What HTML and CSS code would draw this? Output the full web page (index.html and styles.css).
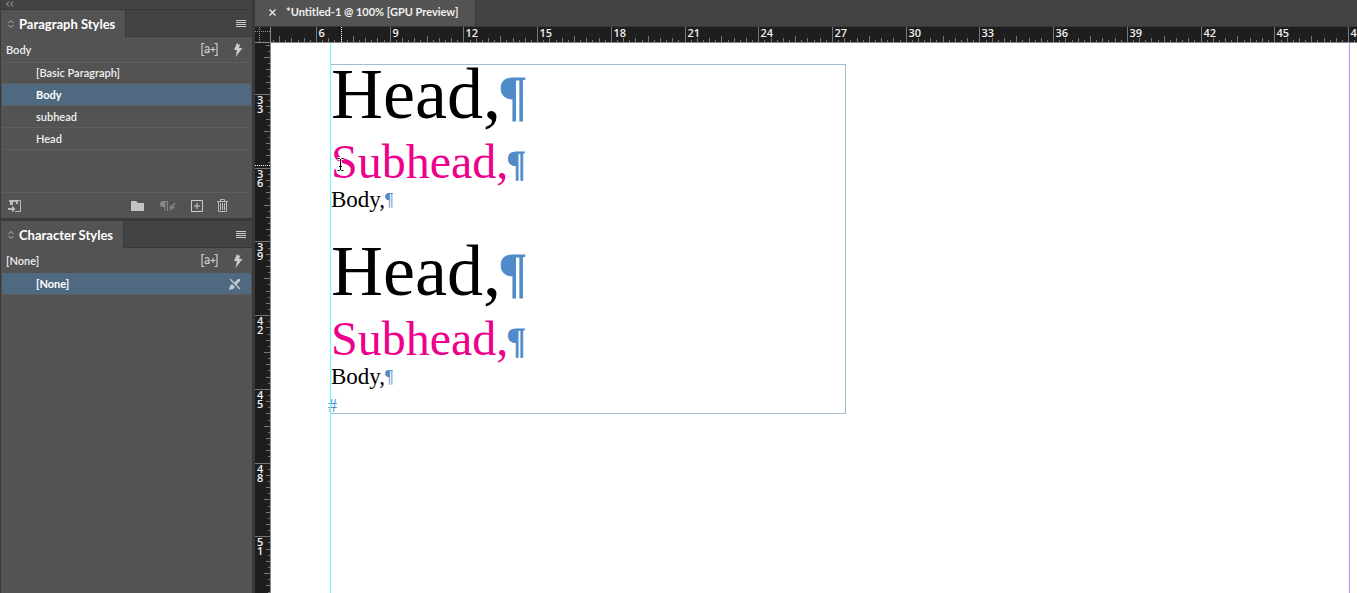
FILE: index.html
```
<!DOCTYPE html>
<html lang="en">
<head>
<meta charset="UTF-8">
<title>*Untitled-1 @ 100% [GPU Preview]</title>
<link rel="stylesheet" href="styles.css">
</head>
<body>
<svg class="defs" aria-hidden="true">
 <symbol id="updown" viewBox="0 0 6 10"><path d="M.5 4L3 1.500 5.500 4M.5 6L3 8.500 5.500 6" fill="none" stroke="#bbb"/></symbol>
 <symbol id="menu" viewBox="0 0 10 8"><path d="M0 .5h10M0 2.500h10M0 4.500h10M0 6.500h10" stroke="#ccc"/></symbol>
 <symbol id="aplus" viewBox="0 0 17 13"><path d="M3.500.5H1v12h2.500M13.500.5H16v12h-2.500M4 4.500Q8 2.500 8 5.500V10M8 6.500Q4 6.500 4 8.300 4 10 6 9.600L8 8.500M9.500 6.500h5M12 4v5" fill="none" stroke="#ccc" stroke-width="1.200"/></symbol>
 <symbol id="bolt" viewBox="0 0 10 14"><path d="M4 0L1 7h3L2.500 14 9.500 5H6l1.500-4.500L6 2z" fill="#ccc"/></symbol>
</svg>
<aside class="dock">
 <div class="dockbar"><svg width="8" height="6"><path d="M3 .5L.8 3 3 5.500M7 .5L4.800 3 7 5.500" fill="none" stroke="#aaa"/></svg></div>
 <section class="panel paragraph">
  <header class="tabs">
   <h2 class="tab"><svg width="6" height="10"><use href="#updown"/></svg>Paragraph Styles</h2>
   <button class="icon" aria-label="Panel menu"><svg width="10" height="8"><use href="#menu"/></svg></button>
  </header>
  <div class="current">
   <span>Body</span>
   <button class="icon" aria-label="Style override highlighter"><svg width="17" height="13"><use href="#aplus"/></svg></button>
   <button class="icon" aria-label="Quick apply"><svg width="10" height="14"><use href="#bolt"/></svg></button>
  </div>
  <ul class="styles">
   <li>[Basic Paragraph]</li>
   <li class="selected">Body</li>
   <li>subhead</li>
   <li>Head</li>
  </ul>
  <footer class="tools">
   <button class="icon load" aria-label="Load styles"><svg width="14" height="14"><path d="M2.500 6V1.500h10v11H7" fill="none" stroke="#bbb"/><path d="M1 1h9v4H8V3H5v3H3V3H1zM0 9h4V6.500L7.500 10 4 13.500V11H0z" fill="#bbb"/></svg></button>
   <button class="icon" aria-label="New group"><svg width="14" height="11"><path d="M0 1h5l2 2h6v8H0z" fill="#c4c4c4"/></svg></button>
   <button class="icon" aria-label="Clear overrides"><svg width="18" height="12"><path d="M4 1h5v10H8V2H6.500v9h-1V7H4Q1 7 1 4t3-3z" fill="#888"/><path d="M11 10l5-7M10.500 7.500h5M12 5l2 4" stroke="#808080" stroke-width="1.500"/></svg></button>
   <button class="icon" aria-label="New style"><svg width="12" height="12"><path d="M.5.5h11v11H.5zM6 3v6M3 6h6" fill="none" stroke="#ccc"/></svg></button>
   <button class="icon" aria-label="Delete style"><svg width="11" height="13"><path d="M0 2.500h11M3.500 2V.5h4V2M1.500 3v9.500h8V3M3.500 4v7M5.500 4v7M7.500 4v7" fill="none" stroke="#bbb"/></svg></button>
  </footer>
 </section>
 <section class="panel character">
  <header class="tabs">
   <h2 class="tab"><svg width="6" height="10"><use href="#updown"/></svg>Character Styles</h2>
   <button class="icon" aria-label="Panel menu"><svg width="10" height="8"><use href="#menu"/></svg></button>
  </header>
  <div class="current">
   <span>[None]</span>
   <button class="icon" aria-label="Style override highlighter"><svg width="17" height="13"><use href="#aplus"/></svg></button>
   <button class="icon" aria-label="Quick apply"><svg width="10" height="14"><use href="#bolt"/></svg></button>
  </div>
  <ul class="styles">
   <li class="selected">[None]<svg width="12" height="12"><path d="M1 1l10 10" stroke="#c4ccd4" stroke-width="1.200"/><path d="M0 12l1-4 2-2 3 3-2 2zM5 5l4-4 2 0 0 2-4 4z" fill="#c4ccd4"/></svg></li>
  </ul>
 </section>
</aside>
<main class="window">
 <div class="doctabs">
  <div class="doctab">
   <button class="icon" aria-label="Close"><svg width="7" height="7"><path d="M.5.5l6 6M6.500.5l-6 6" stroke="#eee" stroke-width="1.300"/></svg></button>
   <span>*Untitled-1 @ 100% [GPU Preview]</span>
  </div>
 </div>
 <div class="work">
  <svg class="corner" width="15" height="15"><path d="M4.500 0v15M0 4.500h15" stroke="#999" stroke-dasharray="1 1"/></svg>
  <svg class="ruler" id="hruler"></svg>
  <svg class="ruler" id="vruler"></svg>
  <div class="canvas">
   <div class="guide"></div>
   <div class="edge"></div>
   <article class="frame">
    <h1>Head,<i>¶</i></h1>
    <h3>Subhead,<i>¶</i></h3>
    <p>Body,<i>¶</i></p>
    <h1>Head,<i>¶</i></h1>
    <h3>Subhead,<i>¶</i></h3>
    <p>Body,<i>¶</i></p>
    <p class="end">#</p>
   </article>
   <svg class="cursor" width="9" height="15"><path d="M1.500 1.500h2l1 1 1-1h2M4.500 2v11M1.500 13.500h2l1-1 1 1h2M3 9.500h3" fill="none" stroke="#fff" stroke-width="3"/><path d="M1.500 1.500h2l1 1 1-1h2M4.500 2v11M1.500 13.500h2l1-1 1 1h2M3 9.500h3" fill="none" stroke="#000"/></svg>
  </div>
 </div>
</main>
<script src="rulers.js"></script>
</body>
</html>
```
FILE: styles.css
```
* {
 box-sizing: border-box;
}
body {
 margin: 0;
 display: flex;
 height: 100vh;
 overflow: hidden;
 background: #393939;
 color: #f0f0f0;
 font: 600 11px/16px Lato, sans-serif;
}
h1, h2, h3, p, ul {
 margin: 0;
 padding: 0;
 font-size: inherit;
 font-weight: inherit;
}
svg {
 display: block;
}
.defs {
 display: none;
}
.icon {
 display: block;
 padding: 0;
 border: 0;
 background: none;
}

/* panels */
.dock {
 display: flex;
 flex-direction: column;
 flex: none;
 width: 252px;
 padding-left: 1px;
}
.dockbar {
 height: 9px;
 padding: 1px 5px;
 background: #434343;
}
.panel {
 margin-top: 1px;
 background: #535353;
}
.paragraph {
 height: 208px;
 display: flex;
 flex-direction: column;
}
.character {
 flex: 1;
 margin-top: 3px;
}
.tabs {
 display: flex;
 align-items: center;
 justify-content: space-between;
 height: 27px;
 padding-right: 6px;
 background: #434343;
 box-shadow: inset 0 -1px #393939;
}
.tab {
 display: flex;
 align-items: center;
 gap: 5px;
 height: 27px;
 padding: 0 10px 0 7px;
 border-right: 1px solid #393939;
 background: #535353;
 color: #fff;
 font-size: 13px;
 font-weight: 700;
}
.current {
 display: flex;
 align-items: center;
 gap: 15px;
 height: 25px;
 padding: 0 9px 0 5px;
}
.current span {
 flex: 1;
}
.styles {
 flex: 1;
 margin: 0 1px;
 box-shadow: inset 0 1px #5d5d5d;
 list-style: none;
}
.styles li {
 display: flex;
 align-items: center;
 justify-content: space-between;
 height: 22px;
 padding: 0 10px 0 34px;
 border-bottom: 1px solid #5d5d5d;
}
.styles .selected {
 background: #4f6981;
 color: #fff;
 font-weight: 700;
}
.tools {
 display: flex;
 align-items: center;
 gap: 14px;
 height: 26px;
 margin: 0 1px;
 padding: 0 23px 0 6px;
 border-top: 1px solid #5d5d5d;
}
.load {
 margin-right: auto;
}

/* document */
.window {
 display: flex;
 flex-direction: column;
 flex: 1;
 min-width: 0;
 margin-left: 3px;
}
.doctabs {
 height: 27px;
 background: #434343;
 border-bottom: 1px solid #393939;
}
.doctab {
 display: inline-flex;
 align-items: center;
 gap: 10px;
 height: 26px;
 padding: 0 17px 2px 14px;
 border-right: 1px solid #393939;
 background: #535353;
 font-weight: 700;
}
.work {
 display: grid;
 grid-template: 15px 1fr / 15px 1fr;
 flex: 1;
 gap: 1px;
 background: #8a8a8a;
}
.corner, .ruler {
 width: 100%;
 height: 100%;
 background: #1e1e1e;
}
.ruler path {
 stroke: #777;
}
.ruler .mark {
 stroke: #fff;
 stroke-dasharray: 1 1;
}
.ruler text {
 fill: #f0f0f0;
 font: 600 11px "Open Sans", sans-serif;
}
.canvas {
 position: relative;
 padding: 21px 0 0 59px;
 background: #fff;
 overflow: hidden;
}
.guide {
 position: absolute;
 z-index: 1;
 top: 0;
 bottom: 0;
 left: 59px;
 width: 1px;
 background: #6ff;
}
.edge {
 position: absolute;
 top: 0;
 bottom: 0;
 right: 7px;
 width: 1px;
 background: #c88cf5;
}
.frame {
 max-width: 516px;
 border: 1px solid #a0bdd6;
 color: #000;
 font-family: "Liberation Serif", serif;
}
.frame h1 {
 font-size: 72px;
 line-height: 58px;
}
.frame h3 {
 margin-top: 15px;
 font-size: 48px;
 line-height: 48px;
 color: #ec008c;
}
.frame h1, .frame h3, .frame p {
 font-weight: 400;
}
.frame p {
 font-size: 23px;
 line-height: 28px;
}
.frame p + h1 {
 margin-top: 28px;
}
.frame i {
 color: #4f8bc9;
 font-size: 75%;
 font-style: normal;
 line-height: 0;
 vertical-align: 4px;
 -webkit-text-stroke: 1px #4f8bc9;
}
.frame h3 i {
 vertical-align: 2px;
}
.frame p i {
 font-size: 18px;
 vertical-align: 1px;
 -webkit-text-stroke: 0;
}
.frame .end {
 margin: 8px 0 0 -3px;
 font-size: 18px;
 line-height: 14px;
 color: #4f8bc9;
}
.cursor {
 position: absolute;
 left: 65px;
 top: 114px;
}
```
FILE: rulers.js
```
var STEP = 73.72; // px for 3 picas
var NS = "http://www.w3.org/2000/svg";

function ruler(id, first, label, vertical, mark) {
 var svg = document.getElementById(id);
 var size = vertical ? svg.clientHeight : svg.clientWidth;
 var d = "";
 for (var i = 0; first + i * STEP / 12 < size; i++) {
  var p = Math.round(first + i * STEP / 12) + 0.5;
  var len = i % 12 == 0 ? 15 : i % 6 == 0 ? 6 : i % 2 == 0 ? 4 : 2;
  d += vertical ? "M15 " + p + "h-" + len : "M" + p + " 15v-" + len;
  if (i % 12 == 0 && p > 0) {
   var n = String(label + i / 4);
   if (vertical) {
    for (var k = 0; k < n.length; k++) addText(svg, 2, p + 9 + k * 9, n[k]);
   } else {
    addText(svg, p + 2, 10, n);
   }
  }
 }
 addPath(svg, d);
 // pointer position
 addPath(svg, vertical ? "M0 " + mark + "h15" : "M" + mark + " 0v15").setAttribute("class", "mark");
}
function addText(svg, x, y, s) {
 var t = document.createElementNS(NS, "text");
 t.setAttribute("x", x);
 t.setAttribute("y", y);
 t.textContent = s;
 svg.appendChild(t);
}
function addPath(svg, d) {
 var e = document.createElementNS(NS, "path");
 e.setAttribute("d", d);
 svg.appendChild(e);
 return e;
}
ruler("hruler", 45 - STEP, 3, false, 70.5);
ruler("vruler", 51 - STEP, 30, true, 122.5);
```
